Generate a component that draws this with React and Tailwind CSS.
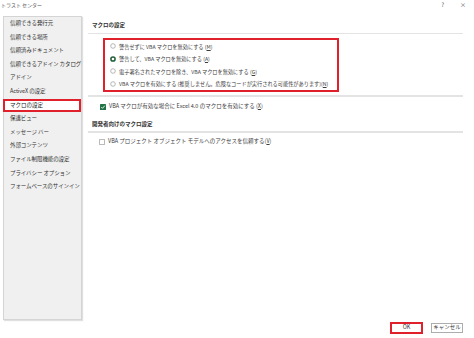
import React from 'react';

const sideItems = [
  '信頼できる発行元',
  '信頼できる場所',
  '信頼済みドキュメント',
  '信頼できるアドイン カタログ',
  'アドイン',
  'ActiveX の設定',
  'マクロの設定',
  '保護ビュー',
  'メッセージ バー',
  '外部コンテンツ',
  'ファイル制限機能の設定',
  'プライバシー オプション',
  'フォームベースのサインイン',
];

const Radio = ({ checked }) => (
  <svg width="6" height="6" viewBox="0 0 6 6" className="shrink-0">
    {checked ? (
      <circle cx="3" cy="3" r="2.1" fill="#fff" stroke="#1f5f37" strokeWidth="1.5" />
    ) : (
      <circle cx="3" cy="3" r="2.3" fill="#fff" stroke="#9a9a9a" strokeWidth="0.7" />
    )}
  </svg>
);

const Check = ({ checked }) => (
  <svg width="6" height="6" viewBox="0 0 6 6" className="shrink-0">
    {checked ? (
      <>
        <rect x="0" y="0" width="6" height="6" rx="0.6" fill="#217346" />
        <path d="M1.3 3.1 L2.5 4.3 L4.8 1.7" fill="none" stroke="#fff" strokeWidth="0.9" />
      </>
    ) : (
      <rect x="0.35" y="0.35" width="5.3" height="5.3" rx="0.5" fill="#fff" stroke="#8a8a8a" strokeWidth="0.7" />
    )}
  </svg>
);

const Key = ({ k }) => (
  <span>
    (<span className="underline">{k}</span>)
  </span>
);

const radios = [
  { label: '警告せずに VBA マクロを無効にする ', k: 'M' },
  { label: '警告して、VBA マクロを無効にする ', k: 'A', checked: true },
  { label: '電子署名されたマクロを除き、VBA マクロを無効にする ', k: 'G' },
  { label: 'VBA マクロを有効にする (推奨しません。危険なコードが実行される可能性があります)', k: 'N' },
];

export default function App() {
  return (
    <div
      className="w-[474px] h-[338px] bg-white overflow-hidden text-[#3c3c3c] text-[5.5px] leading-none"
      style={{ fontFamily: '"Noto Sans CJK JP", "Noto Sans", sans-serif' }}
    >
      {/* title bar */}
      <div className="h-[16px] flex items-start justify-between pt-[2px] pl-[1px] pr-[8px]">
        <span className="text-[5px] text-[#555]">トラスト センター</span>
        <div className="flex gap-[16px] text-[6px] text-[#555]">
          <span>?</span>
          <span>×</span>
        </div>
      </div>

      <div className="flex h-[304px]">
        {/* sidebar */}
        <div className="ml-[3px] w-[79px] h-full bg-[#f0f0f0] border border-[#d4d4d4] shadow-[1px_1px_1px_rgba(0,0,0,0.12)]">
          {sideItems.map((t) => (
            <div
              key={t}
              className={
                t === 'マクロの設定'
                  ? 'h-[13.6px] flex items-center pl-[5px] -ml-px w-[78px] border-2 border-[#e0202a] bg-white text-[#222] whitespace-nowrap'
                  : 'h-[13.6px] flex items-center pl-[6px] text-[#333] whitespace-nowrap tracking-[-0.1px]'
              }
            >
              {t}
            </div>
          ))}
        </div>

        {/* right panel */}
        <div className="ml-[6px] w-[375px] flex flex-col">
          <div className="pl-[4px] pt-[7px] font-bold text-[#333]">マクロの設定</div>
          <div className="mt-[4px] h-[1.5px] bg-[#e3e3e3]" />
          <div className="ml-[15px] mt-[4px] w-[236px] border-2 border-[#e0202a] text-[5.2px]">
            {radios.map((r) => (
              <div key={r.k} className="h-[12.5px] flex items-center gap-[3px] pl-[5px] whitespace-nowrap">
                <Radio checked={r.checked} />
                <span>
                  {r.label}
                  <Key k={r.k} />
                </span>
              </div>
            ))}
          </div>
          <div className="mt-[3px] h-[1.5px] bg-[#e3e3e3]" />
          <div className="mt-[7px] pl-[12px] flex items-center gap-[3px] whitespace-nowrap">
            <Check checked />
            <span>
              VBA マクロが有効な場合に Excel 4.0 のマクロを有効にする <Key k="X" />
            </span>
          </div>
          <div className="pl-[4px] mt-[12px] font-bold text-[#333]">開発者向けのマクロ設定</div>
          <div className="mt-[4px] h-[1.5px] bg-[#e3e3e3]" />
          <div className="mt-[6px] pl-[11px] flex items-center gap-[3px] whitespace-nowrap">
            <Check />
            <span>
              VBA プロジェクト オブジェクト モデルへのアクセスを信頼する
              <Key k="V" />
            </span>
          </div>
        </div>
      </div>

      {/* footer buttons */}
      <div className="mt-[2px] flex items-center justify-end gap-[8px] pr-[11px]">
        <button className="w-[33px] h-[12px] border-2 border-[#e0202a] bg-white flex items-center justify-center text-[5.5px] text-[#333]">
          OK
        </button>
        <button className="w-[32px] h-[10px] border border-[#adadad] bg-white flex items-center justify-center text-[5.5px] text-[#333]">
          キャンセル
        </button>
      </div>
    </div>
  );
}
